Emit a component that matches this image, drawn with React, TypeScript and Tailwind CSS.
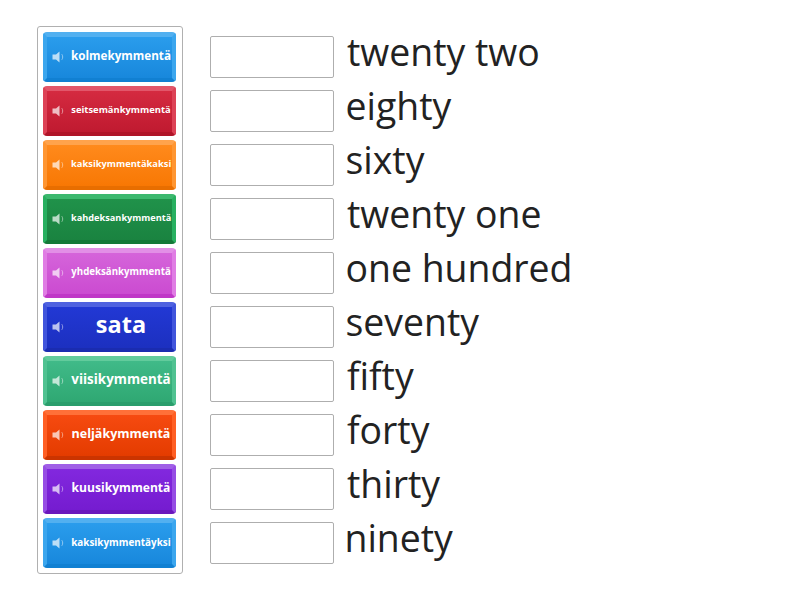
const buttons = [
  { t: "kolmekymmentä", size: "text-[11.7px] -translate-y-px", face: "bg-[linear-gradient(#2a9cec,#1888dc)]", border: "border-t-[#52b0f0] border-x-[#3ba6ee] border-b-[#1180d2]" },
  { t: "seitsemänkymmentä", size: "text-[9.4px]", face: "bg-[linear-gradient(#d42a40,#c01a30)]", border: "border-t-[#e2566a] border-x-[#dd4256] border-b-[#b01428]" },
  { t: "kaksikymmentäkaksi", size: "text-[9.35px]", face: "bg-[linear-gradient(#ff8a1c,#f87804)]", border: "border-t-[#ffa34c] border-x-[#ff9632] border-b-[#e86e00]" },
  { t: "kahdeksankymmentä", size: "text-[9.2px] -translate-y-px", face: "bg-[linear-gradient(#20924a,#1a8340)]", border: "border-t-[#3cb86e] border-x-[#28b060] border-b-[#147838]" },
  { t: "yhdeksänkymmentä", size: "text-[9.7px]", face: "bg-[linear-gradient(#d564da,#cb4bd1)]", border: "border-t-[#e28fe6] border-x-[#e07de4] border-b-[#c036c7]" },
  { t: "sata", size: "text-[23.5px] -translate-y-[2px]", face: "bg-[linear-gradient(#2238d4,#1c30c0)]", border: "border-t-[#4f62e0] border-x-[#4155dc] border-b-[#1a2cb0]" },
  { t: "viisikymmentä", size: "text-[13.4px] -translate-y-px", face: "bg-[linear-gradient(#40ba88,#2fa873)]", border: "border-t-[#62cb9c] border-x-[#50c291] border-b-[#2a9e6c]" },
  { t: "neljäkymmentä", size: "text-[12.5px]", face: "bg-[linear-gradient(#f64a10,#e43c00)]", border: "border-t-[#ff7038] border-x-[#ff5f24] border-b-[#cb3400]" },
  { t: "kuusikymmentä", size: "text-[12.1px]", face: "bg-[linear-gradient(#8228de,#751cd0)]", border: "border-t-[#a05fe6] border-x-[#964de4] border-b-[#6a16bc]" },
  { t: "kaksikymmentäyksi", size: "text-[9.9px]", face: "bg-[linear-gradient(#2a9cec,#1888dc)]", border: "border-t-[#52b0f0] border-x-[#3ba6ee] border-b-[#1180d2]" },
];

const rows = [
  { t: "twenty two", ml: "ml-[13px]" },
  { t: "eighty", ml: "ml-[11.5px]" },
  { t: "sixty", ml: "ml-[11.5px]" },
  { t: "twenty one", ml: "ml-[13px]" },
  { t: "one hundred", ml: "ml-[11.5px]" },
  { t: "seventy", ml: "ml-[11.5px]" },
  { t: "fifty", ml: "ml-[13px]" },
  { t: "forty", ml: "ml-[13px]" },
  { t: "thirty", ml: "ml-[13px]" },
  { t: "ninety", ml: "ml-[10.5px]" },
];

function Speaker() {
  return (
    <svg width="14" height="14" viewBox="0 0 14 14" className="shrink-0 opacity-70">
      <path d="M0.5 4.5H4L7.5 1.5V12.5L4 9.5H0.5Z" fill="#fff" />
      <path d="M9.8 4.2C11 6 11 8 9.8 9.8" fill="none" stroke="#fff" strokeWidth="1" opacity="0.7" />
    </svg>
  );
}

export default function App() {
  return (
    <div className="flex w-[800px] h-[600px] bg-white items-start pl-[37px] pt-[26px] [font-family:'Open_Sans',sans-serif]">
      <div className="w-[146px] h-[548px] border border-[#b0b0b0] rounded-[3px] pl-[5px] pt-[5px] flex flex-col gap-[4px] shrink-0">
        {buttons.map((b) => (
          <div
            key={b.t}
            className={`w-[133px] h-[50px] rounded-[4px] border-t-[5px] border-x-[4px] border-b-[4px] flex items-center pl-[5px] pb-[2px] ${b.face} ${b.border}`}
          >
            <Speaker />
            <span className={`w-[100px] ml-[5px] text-center text-white font-bold whitespace-nowrap ${b.size}`}>{b.t}</span>
          </div>
        ))}
      </div>
      <div className="ml-[27px] mt-[10px] flex flex-col gap-[12px]">
        {rows.map((r) => (
          <div key={r.t} className="flex items-center h-[42px]">
            <div className="w-[124px] h-[42px] border border-[#aeaeae] rounded-[2px] bg-white shrink-0" />
            <span className={`text-[37.4px] leading-[36px] text-[#222222] whitespace-nowrap -translate-y-[5px] ${r.ml}`}>{r.t}</span>
          </div>
        ))}
      </div>
    </div>
  );
}
